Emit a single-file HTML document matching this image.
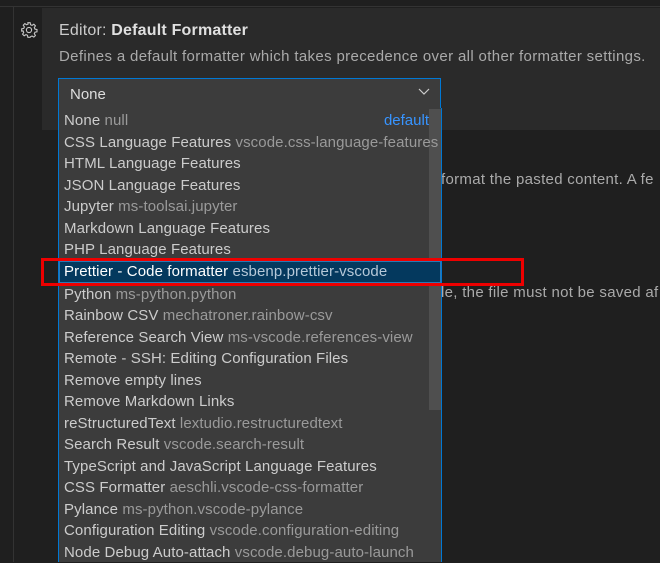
<!DOCTYPE html>
<html><head><style>
*{margin:0;padding:0;box-sizing:border-box}
body{width:660px;height:562px;background:#1f1f1f;position:relative;overflow:hidden;font-family:"Liberation Sans",sans-serif;color:#ccc;font-size:15px}
.abs{position:absolute;white-space:nowrap}
.row{position:absolute;left:64px;height:21.5px;line-height:21.5px;white-space:nowrap;color:#ccc;font-size:15px;letter-spacing:0.1px;margin-top:1px}
.row span{color:#9a9a9a}
</style></head><body>
<div class="abs" style="left:0;top:6px;width:660px;height:1px;background:#333"></div>
<div class="abs" style="left:13px;top:7px;width:1px;height:555px;background:#333"></div>
<div class="abs" style="left:42px;top:8px;width:618px;height:122px;background:#2a2a2a"></div>
<svg class="abs" style="left:20px;top:21px" width="18" height="18" viewBox="0 0 16 16"><circle cx="8" cy="8" r="2.3" fill="none" stroke="#c5c5c5" stroke-width="1"/><path d="M7 1.5h2l.4 1.8 1.3.6 1.6-1 1.4 1.4-1 1.6.6 1.3 1.8.4v2l-1.8.4-.6 1.3 1 1.6-1.4 1.4-1.6-1-1.3.6L9 14.5H7l-.4-1.8-1.3-.6-1.6 1-1.4-1.4 1-1.6-.6-1.3L1.5 9V7l1.8-.4.6-1.3-1-1.6 1.4-1.4 1.6 1 1.3-.6z" fill="none" stroke="#c5c5c5" stroke-width="1"/></svg>
<div class="abs" style="left:59px;top:22px;font-size:16px;color:#ccc;letter-spacing:0.2px">Editor: <b style="color:#e0e0e0">Default Formatter</b></div>
<div class="abs" style="left:59px;top:48px;font-size:15px;color:#aaa;letter-spacing:0.35px">Defines a default formatter which takes precedence over all other formatter settings.</div>
<div class="abs" style="left:58px;top:78px;width:383px;height:31px;background:#3c3c3c;border:1px solid #0078d4"></div>
<div class="abs" style="left:70px;top:86px;color:#ddd">None</div>
<svg class="abs" style="left:418px;top:88px" width="12" height="8" viewBox="0 0 12 8"><path d="M1 1l5 5 5-5" fill="none" stroke="#ccc" stroke-width="1.2"/></svg>
<div class="abs" style="left:441px;top:171px;color:#aaa;letter-spacing:0.3px">format the pasted content. A fe</div>
<div class="abs" style="left:441px;top:284px;color:#aaa;letter-spacing:0.3px">le, the file must not be saved af</div>
<div class="abs" style="left:58px;top:108px;width:384px;height:454px;background:#3c3c3c;border-left:1px solid #0078d4;border-right:1px solid #0078d4"></div>
<div class="abs" style="left:429px;top:109px;width:12px;height:301px;background:#4f4f4f"></div>
<div class="abs" style="left:59px;top:261px;width:382px;height:22px;background:#04395e;border:1px solid #2b79b5"></div>
<div class="row" style="top:109px">None <span>null</span></div>
<div class="abs" style="right:231px;top:110px;line-height:21.5px;color:#3794ff">default</div>
<div class="row" style="top:130.5px">CSS Language Features <span>vscode.css-language-features</span></div>
<div class="row" style="top:152px">HTML Language Features</div>
<div class="row" style="top:173.5px">JSON Language Features</div>
<div class="row" style="top:195px">Jupyter <span>ms-toolsai.jupyter</span></div>
<div class="row" style="top:216.5px">Markdown Language Features</div>
<div class="row" style="top:238px">PHP Language Features</div>
<div class="row" style="top:260px;color:#fff">Prettier - Code formatter <span style="color:#b5c8d8">esbenp.prettier-vscode</span></div>
<div class="row" style="top:282.5px">Python <span>ms-python.python</span></div>
<div class="row" style="top:304px">Rainbow CSV <span>mechatroner.rainbow-csv</span></div>
<div class="row" style="top:325.5px">Reference Search View <span>ms-vscode.references-view</span></div>
<div class="row" style="top:347px">Remote - SSH: Editing Configuration Files</div>
<div class="row" style="top:368.5px">Remove empty lines</div>
<div class="row" style="top:390px">Remove Markdown Links</div>
<div class="row" style="top:411.5px">reStructuredText <span>lextudio.restructuredtext</span></div>
<div class="row" style="top:433px">Search Result <span>vscode.search-result</span></div>
<div class="row" style="top:454.5px">TypeScript and JavaScript Language Features</div>
<div class="row" style="top:476px">CSS Formatter <span>aeschli.vscode-css-formatter</span></div>
<div class="row" style="top:497.5px">Pylance <span>ms-python.vscode-pylance</span></div>
<div class="row" style="top:519px">Configuration Editing <span>vscode.configuration-editing</span></div>
<div class="row" style="top:540.5px">Node Debug Auto-attach <span>vscode.debug-auto-launch</span></div>
<div class="abs" style="left:41px;top:258px;width:483px;height:28px;border:3px solid #e00"></div>
</body></html>
